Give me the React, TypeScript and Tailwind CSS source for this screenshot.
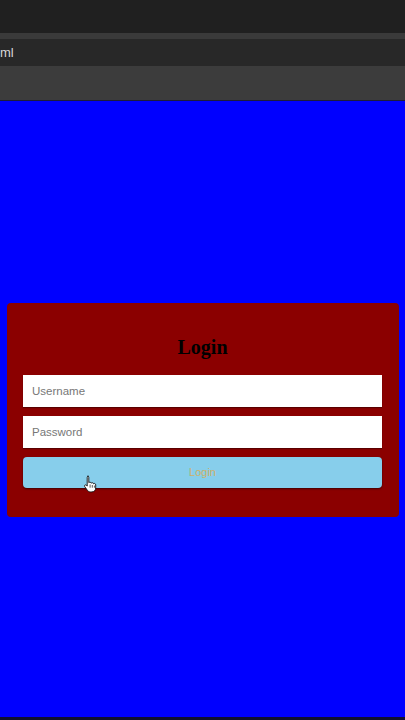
export default function App() {
  return (
    <div className="flex h-[720px] w-[405px] flex-col overflow-hidden bg-[#0000ff] font-['Liberation_Sans',Arial,sans-serif]">
      {/* browser chrome */}
      <div className="h-[33px] bg-[#202020]" />
      <div className="h-[6px] bg-[#3a3a3a]" />
      <div className="flex h-[27px] items-center bg-[#282828]">
        <span className="text-[13px] text-[#d8d8d8]">ml</span>
      </div>
      <div className="h-[34px] bg-[#3c3c3c]" />
      <div className="h-px bg-[#1c1c3a]" />

      <main className="relative flex flex-1 items-center">
        <section className="ml-[7px] mt-[2px] w-[392px] rounded-[4px] bg-[#8b0000] pb-[29px] pl-4 pr-[17px] pt-[33px]">
          <h2 className="text-center font-['Liberation_Serif','Times_New_Roman',serif] text-[20px] font-bold leading-[23px] text-black">
            Login
          </h2>
          <form className="mt-4 flex flex-col gap-[9px]" onSubmit={(e) => e.preventDefault()}>
            <input
              type="text"
              placeholder="Username"
              className="h-8 w-full bg-white px-[9px] text-[11.5px] text-black shadow-[0_1px_1px_rgba(0,0,0,0.35)] outline-none placeholder:text-[#777]"
            />
            <input
              type="password"
              placeholder="Password"
              className="h-8 w-full bg-white px-[9px] text-[11.5px] text-black shadow-[0_1px_1px_rgba(0,0,0,0.35)] outline-none placeholder:text-[#777]"
            />
            <button
              type="submit"
              className="h-[31px] w-full rounded-[4px] bg-[#87ceeb] text-[11px] text-[#cdb169] shadow-[0_1px_2px_rgba(0,0,0,0.55)]"
            >
              Login
            </button>
          </form>
        </section>

        {/* mouse cursor captured in the screenshot */}
        <svg
          className="absolute left-[84px] top-[374px]"
          width="13"
          height="18"
          viewBox="0 0 13 18"
        >
          <path
            d="M3.5 1.2c.8 0 1.3.6 1.3 1.3v5.2c.3-.4.8-.6 1.3-.5.6.1 1 .5 1.1 1 .3-.4.8-.6 1.3-.5.6.1 1 .6 1 1.1.3-.3.8-.5 1.3-.3.6.2.9.7.9 1.3v3.2c0 2.2-1.6 3.900-3.800 3.900H6.4c-1.3 0-2.3-.6-3-1.6L.7 11.6c-.4-.6-.2-1.3.4-1.6.5-.3 1.1-.2 1.5.3l.6.8V2.5c0-.7.5-1.3 1.3-1.3z"
            fill="#fff"
            stroke="#111"
            strokeWidth="0.9"
          />
          <path d="M6.1 9.5v3.2M8.3 10v2.7M10.4 10.6v2.1" stroke="#111" strokeWidth="0.7" />
        </svg>
      </main>

      <div className="h-[3px] bg-[#101030]" />
    </div>
  );
}
